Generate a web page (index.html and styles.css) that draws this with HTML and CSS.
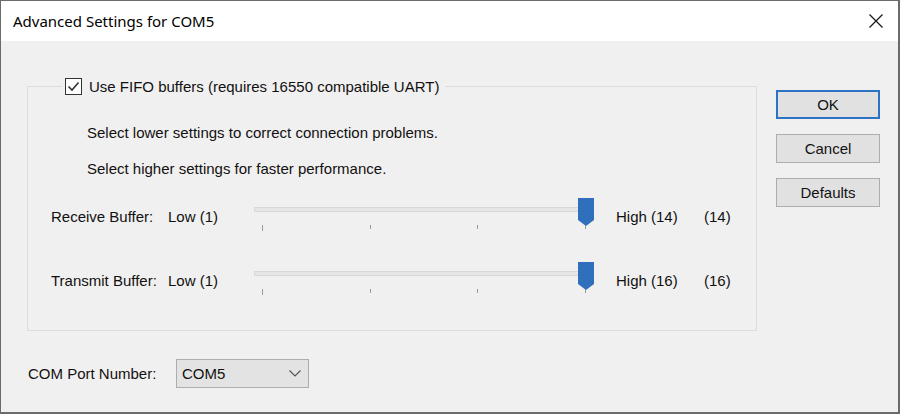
FILE: index.html
```html
<!DOCTYPE html>
<html lang="en">

<head>
    <meta charset="UTF-8">
    <title>Advanced Settings for COM5</title>
    <link rel="stylesheet" href="styles.css">
</head>

<body>
    <div class="window">
        <div class="titlebar">
            <span class="title">Advanced Settings for COM5</span>
            <svg class="close" width="14" height="14" viewBox="0 0 14 14">
                <path d="M0.5 0.5 L13.5 13.5 M13.5 0.5 L0.5 13.5" stroke="#1a1a1a" stroke-width="1.3" fill="none" />
            </svg>
        </div>

        <div class="content">
            <div class="left">
                <div class="group">
                    <label class="legend">
                        <svg class="check" width="17" height="17" viewBox="0 0 17 17">
                            <rect x="0.5" y="0.5" width="16" height="16" fill="#fff" stroke="#333" />
                            <path d="M3.5 8.5 L7 12 L13.5 4.5" stroke="#333" stroke-width="1.6" fill="none" />
                        </svg>
                        <span>Use FIFO buffers (requires 16550 compatible UART)</span>
                    </label>

                    <p class="note first">Select lower settings to correct connection problems.</p>
                    <p class="note">Select higher settings for faster performance.</p>

                    <div class="rows">
                        <span class="cell">Receive Buffer:</span>
                        <span class="cell">Low (1)</span>
                        <div class="slider">
                            <div class="track"></div>
                            <div class="ticks"><i class="long"></i><i></i><i></i><i></i></div>
                            <svg class="thumb" style="--pos: 1" width="16" height="28" viewBox="0 0 16 28">
                                <path d="M0 0 H16 V22 L8 28 L0 22 Z" fill="#2f6fbb" />
                            </svg>
                        </div>
                        <span class="cell">High (14)</span>
                        <span class="cell">(14)</span>

                        <span class="cell">Transmit Buffer:</span>
                        <span class="cell">Low (1)</span>
                        <div class="slider">
                            <div class="track"></div>
                            <div class="ticks"><i class="long"></i><i></i><i></i><i></i></div>
                            <svg class="thumb" style="--pos: 1" width="16" height="28" viewBox="0 0 16 28">
                                <path d="M0 0 H16 V22 L8 28 L0 22 Z" fill="#2f6fbb" />
                            </svg>
                        </div>
                        <span class="cell">High (16)</span>
                        <span class="cell">(16)</span>
                    </div>
                </div>

                <div class="com-row">
                    <span class="com-label">COM Port Number:</span>
                    <div class="select">
                        <span>COM5</span>
                        <svg width="12" height="7" viewBox="0 0 12 7">
                            <path d="M0.5 0.5 L6 6 L11.5 0.5" stroke="#555" stroke-width="1.2" fill="none" />
                        </svg>
                    </div>
                </div>
            </div>

            <div class="buttons">
                <button class="default">OK</button>
                <button>Cancel</button>
                <button>Defaults</button>
            </div>
        </div>
    </div>
</body>

</html>
```

FILE: styles.css
```css
body {
    margin: 0;
    font-family: "Liberation Sans", Arial, sans-serif;
    font-size: 15px;
    color: #111;
}

.window {
    width: 900px;
    height: 414px;
    box-sizing: border-box;
    border: 1px solid #6b6b6b;
    border-right-width: 2px;
    border-bottom-width: 2px;
    background-color: #f1f0f0;
    display: flex;
    flex-direction: column;
}

.titlebar {
    height: 40px;
    flex-shrink: 0;
    background-color: #fff;
    display: flex;
    align-items: center;
    justify-content: space-between;
    padding: 0 15px 0 12px;
}

.title {
    font-family: "Noto Sans", sans-serif;
    font-size: 15px;
    color: #000;
}

.content {
    display: flex;
    padding: 45px 0 0 26px;
}

.left {
    width: 730px;
}

.group {
    height: 245px;
    box-sizing: border-box;
    border: 1px solid #dcdcdc;
    padding-left: 23px;
    display: flex;
    flex-direction: column;
}

.legend {
    align-self: flex-start;
    height: 18px;
    margin: -10px 0 0 11px;
    padding: 0 6px 0 3px;
    background-color: #f1f0f0;
    display: flex;
    align-items: center;
    gap: 7px;
}

.note {
    margin: 18px 0 0 36px;
    line-height: 18px;
}

.note.first {
    margin-top: 29px;
}

.rows {
    margin-top: 19px;
    display: grid;
    grid-template-columns: 117px 86px 362px 88px auto;
    grid-auto-rows: 36px;
    row-gap: 28px;
    align-items: start;
}

.cell {
    padding-top: 11px;
    line-height: 17px;
    white-space: nowrap;
}

.slider {
    position: relative;
    width: 339px;
    height: 36px;
}

.track {
    margin-top: 10px;
    height: 3px;
    border: 1px solid #d8d8d8;
    background-color: #e6e6e6;
}

.ticks {
    margin-top: 13px;
    padding: 0 7px 0 8px;
    display: flex;
    justify-content: space-between;
    align-items: flex-start;
}

.ticks i {
    width: 1px;
    height: 4px;
    background-color: #9a9a9a;
}

.ticks i.long {
    height: 6px;
}

.thumb {
    position: absolute;
    top: 1px;
    left: calc(0.5px + (100% - 16px) * var(--pos));
}

.com-row {
    margin-top: 28px;
    padding-left: 1px;
    display: flex;
    align-items: center;
}

.com-label {
    width: 148px;
}

.select {
    width: 133px;
    height: 29px;
    box-sizing: border-box;
    border: 1px solid #adadad;
    background-color: #e3e3e3;
    display: flex;
    align-items: center;
    justify-content: space-between;
    padding: 0 7px 0 5px;
}

.buttons {
    margin: 4px 0 0 19px;
    display: flex;
    flex-direction: column;
    gap: 15px;
}

button {
    width: 104px;
    height: 29px;
    box-sizing: border-box;
    font-family: "Liberation Sans", Arial, sans-serif;
    font-size: 15px;
    color: #111;
    background-color: #e1e1e1;
    border: 1px solid #adadad;
    padding: 0;
}

button.default {
    border: 2px solid #2d73c4;
}
```
